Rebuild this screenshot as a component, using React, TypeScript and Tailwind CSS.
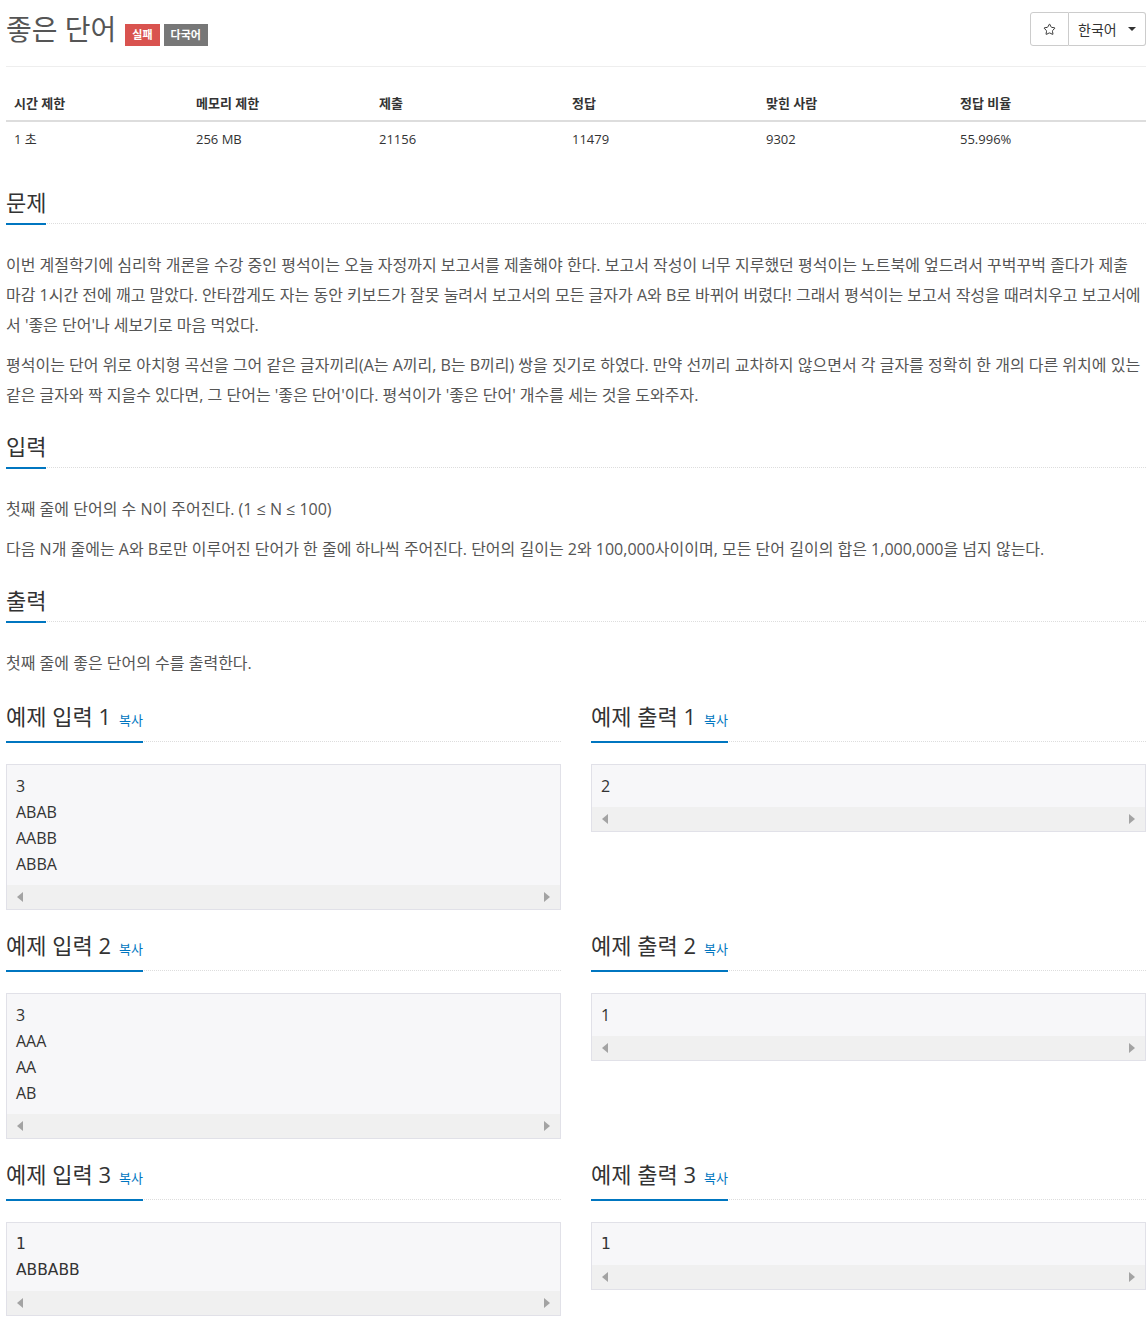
import { Star } from "lucide-react"

const FONT = "font-['Open_Sans','Noto_Sans_CJK_KR',sans-serif]"

// Section heading with blue underline over a dotted rule
function Headline({ title, copy, top = "mt-[22px]" }: { title: string; copy?: boolean; top?: string }) {
  return (
    <div className={`${top} border-b border-dotted border-[#ddd]`}>
      <span className="inline-flex items-baseline -mb-[2px] border-b-2 border-[#0076c0] pb-[7px] text-[22px] leading-[28px] text-[#333]">
        {title}
        {copy && <span className="ml-[8px] text-[13px] text-[#0076c0]">복사</span>}
      </span>
    </div>
  )
}

function Para({ children, last }: { children: React.ReactNode; last?: boolean }) {
  return (
    <p className={`${last ? "" : "mb-[10px]"} text-[16px] leading-[30px] text-[#555]`}>{children}</p>
  )
}

// Sample data box with fake horizontal scrollbar
function Sample({ lines, alt }: { lines: string[]; alt?: boolean }) {
  return (
    <div className="mt-[22px] border border-[#e1e1e8] bg-[#f7f7f9]">
      <div
        className={
          "px-[9px] pt-[8px] pb-[8px] leading-[26px] text-[#333] " +
          (alt ? "font-['DejaVu_Sans',sans-serif] text-[15.5px]" : "text-[16px]")
        }
      >
        {lines.map((l, i) => (
          <div key={i}>{l}</div>
        ))}
      </div>
      <div className="flex h-[24px] items-center justify-between bg-[#f0f0f0] px-[10px]">
        <span className="h-0 w-0 border-y-[5px] border-r-[6px] border-y-transparent border-r-[#a3a3a3]" />
        <span className="h-0 w-0 border-y-[5px] border-l-[6px] border-y-transparent border-l-[#a3a3a3]" />
      </div>
    </div>
  )
}

const stats = [
  ["시간 제한", "1 초", "w-[182px]"],
  ["메모리 제한", "256 MB", "w-[183px]"],
  ["제출", "21156", "w-[193px]"],
  ["정답", "11479", "w-[194px]"],
  ["맞힌 사람", "9302", "w-[194px]"],
  ["정답 비율", "55.996%", "w-[194px]"]
]

const samples = [
  { n: 1, input: ["3", "ABAB", "AABB", "ABBA"], output: ["2"] },
  { n: 2, input: ["3", "AAA", "AA", "AB"], output: ["1"] },
  { n: 3, input: ["1", "ABBABB"], output: ["1"], alt: true }
]

export default function App() {
  return (
    <div className={`${FONT} min-h-screen bg-white pl-[6px] pb-[6px]`}>
      <div className="w-[1140px]">
        {/* Title */}
        <div className="flex items-start justify-between border-b border-[#eee] pb-[19px]">
          <div className="mt-[11px] flex items-start">
            <h1 className="text-[28px] leading-[36px] text-[#555]">좋은 단어</h1>
            <span className="ml-[9px] mt-[13px] flex h-[22px] items-center bg-[#d9534f] px-[7px] text-[11px] font-bold text-white">
              실패
            </span>
            <span className="ml-[4px] mt-[13px] flex h-[22px] items-center bg-[#777] px-[7px] text-[11px] font-bold text-white">
              다국어
            </span>
          </div>
          <div className="mt-[12px] flex h-[34px] text-[14px] text-[#333]">
            <div className="flex w-[39px] items-center justify-center rounded-l-[3px] border border-[#ccc]">
              <Star size={13} strokeWidth={1.8} />
            </div>
            <div className="flex w-[77px] items-center justify-between rounded-r-[3px] border border-l-0 border-[#ccc] pl-[9px] pr-[9px]">
              <span>한국어</span>
              <span className="h-0 w-0 border-x-[4px] border-t-[4px] border-x-transparent border-t-[#333]" />
            </div>
          </div>
        </div>

        {/* Stats table */}
        <table className="mt-[21px] w-full table-fixed border-collapse text-[13px] text-[#333]">
          <thead>
            <tr className="border-b-2 border-[#ddd]">
              {stats.map(([h, , w]) => (
                <th key={h} className={`${w} h-[33px] px-[8px] text-left font-bold`}>
                  {h}
                </th>
              ))}
            </tr>
          </thead>
          <tbody>
            <tr>
              {stats.map(([h, v]) => (
                <td key={h} className="h-[36px] px-[8px]">
                  {v}
                </td>
              ))}
            </tr>
          </tbody>
        </table>

        <Headline title="문제" top="mt-[31px]" />
        <div className="mt-[26px]">
          <Para>
            이번 계절학기에 심리학 개론을 수강 중인 평석이는 오늘 자정까지 보고서를 제출해야 한다. 보고서 작성이 너무 지루했던 평석이는 노트북에 엎드려서 꾸벅꾸벅 졸다가 제출 마감 1시간 전에 깨고 말았다. 안타깝게도 자는 동안 키보드가 잘못 눌려서 보고서의 모든 글자가 A와 B로 바뀌어 버렸다! 그래서 평석이는 보고서 작성을 때려치우고 보고서에서 '좋은 단어'나 세보기로 마음 먹었다.
          </Para>
          <Para last>
            평석이는 단어 위로 아치형 곡선을 그어 같은 글자끼리(A는 A끼리, B는 B끼리) 쌍을 짓기로 하였다. 만약 선끼리 교차하지 않으면서 각 글자를 정확히 한 개의 다른 위치에 있는 같은 글자와 짝 지을수 있다면, 그 단어는 '좋은 단어'이다. 평석이가 '좋은 단어' 개수를 세는 것을 도와주자.
          </Para>
        </div>

        <Headline title="입력" />
        <div className="mt-[26px]">
          <Para>첫째 줄에 단어의 수 N이 주어진다. (1 ≤ N ≤ 100)</Para>
          <Para last>
            다음 N개 줄에는 A와 B로만 이루어진 단어가 한 줄에 하나씩 주어진다. 단어의 길이는 2와 100,000사이이며, 모든 단어 길이의 합은 1,000,000을 넘지 않는다.
          </Para>
        </div>

        <Headline title="출력" />
        <div className="mt-[26px]">
          <Para last>첫째 줄에 좋은 단어의 수를 출력한다.</Para>
        </div>

        {/* Samples */}
        {samples.map((s, i) => (
          <div key={s.n} className="grid grid-cols-2 items-start gap-x-[30px]">
            <div>
              <Headline title={`예제 입력 ${s.n}`} copy top={i === 0 ? "mt-[24px]" : "mt-[21px]"} />
              <Sample lines={s.input} alt={s.alt} />
            </div>
            <div>
              <Headline title={`예제 출력 ${s.n}`} copy top={i === 0 ? "mt-[24px]" : "mt-[21px]"} />
              <Sample lines={s.output} alt={s.alt} />
            </div>
          </div>
        ))}
      </div>
    </div>
  )
}
